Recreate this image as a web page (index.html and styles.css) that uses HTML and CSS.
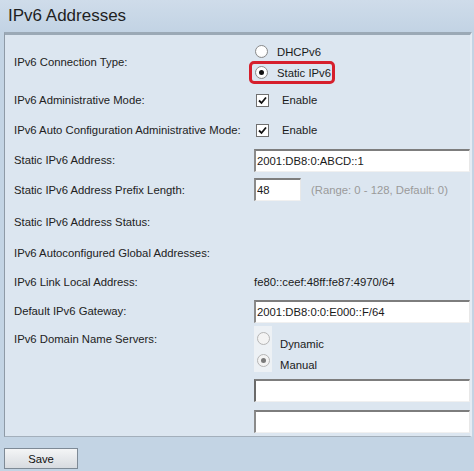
FILE: index.html
```html
<!DOCTYPE html>
<html>
<head>
<meta charset="utf-8">
<link rel="stylesheet" href="styles.css">
</head>
<body>
<div class="page">
  <div class="titlebar"><h1 class="title">IPv6 Addresses</h1></div>
  <div class="panel">
    <div class="form">
      <div class="lbl r1">IPv6 Connection Type:</div>
      <div class="val r1 stack">
        <div class="opt"><span class="radio"></span><span class="otext">DHCPv6</span></div>
        <div class="opt hl"><span class="radio on"></span><span class="otext">Static IPv6</span></div>
      </div>

      <div class="lbl r2">IPv6 Administrative Mode:</div>
      <div class="val r2"><span class="check"><svg width="11" height="11" viewBox="0 0 11 11"><path d="M2 5.5 L4.5 8 L9 2.5" fill="none" stroke="#111" stroke-width="1.8"/></svg></span><span class="ctext">Enable</span></div>

      <div class="lbl r3">IPv6 Auto Configuration Administrative Mode:</div>
      <div class="val r3"><span class="check"><svg width="11" height="11" viewBox="0 0 11 11"><path d="M2 5.5 L4.5 8 L9 2.5" fill="none" stroke="#111" stroke-width="1.8"/></svg></span><span class="ctext">Enable</span></div>

      <div class="lbl r4">Static IPv6 Address:</div>
      <div class="val r4"><input class="field wide" type="text" value="2001:DB8:0:ABCD::1"></div>

      <div class="lbl r5">Static IPv6 Address Prefix Length:</div>
      <div class="val r5"><input class="field short" type="text" value="48"><span class="hint">(Range: 0 - 128, Default: 0)</span></div>

      <div class="lbl r6">Static IPv6 Address Status:</div>
      <div class="val r6"></div>

      <div class="lbl r7">IPv6 Autoconfigured Global Addresses:</div>
      <div class="val r7"></div>

      <div class="lbl r8">IPv6 Link Local Address:</div>
      <div class="val r8"><span class="plain">fe80::ceef:48ff:fe87:4970/64</span></div>

      <div class="lbl r9">Default IPv6 Gateway:</div>
      <div class="val r9"><input class="field wide" type="text" value="2001:DB8:0:0:E000::F/64"></div>

      <div class="lbl r10">IPv6 Domain Name Servers:</div>
      <div class="val r10 dns">
        <div class="dnsopts">
          <div class="dnsradios"><span class="radio dis"></span><span class="radio dis on"></span></div>
          <div class="dnslabels"><span>Dynamic</span><span>Manual</span></div>
        </div>
        <input class="field wide caret" type="text" value="">
        <input class="field wide" type="text" value="">
      </div>
    </div>
  </div>
  <div class="footer"><button class="save" type="button">Save</button></div>
</div>
</body>
</html>
```
FILE: styles.css
```css
html, body {
  margin: 0;
  padding: 0;
}
body {
  width: 474px;
  height: 471px;
  overflow: hidden;
  background: #c3d4e4;
  font-family: "Liberation Sans", Arial, sans-serif;
  font-size: 11.3px;
  color: #1a1a1a;
}
.page {
  display: flex;
  flex-direction: column;
  height: 471px;
}
.titlebar {
  height: 32px;
  background: linear-gradient(#cfdcea, #c2d3e4);
  display: flex;
  align-items: center;
  padding-left: 8px;
}
.title {
  margin: 0;
  font-weight: normal;
  font-size: 17px;
  color: #1f1f1f;
}
.panel {
  margin: 0 2px 0 4px;
  background: #dce6f0;
  border-top: 3px solid #9ba9b6;
  border-left: 1px solid #8e9aa6;
  border-bottom: 1px solid #a3afbb;
  border-right: 2px solid #e4ecf4;
  padding: 5px 0 0 9px;
  height: 405px;
  box-sizing: border-box;
}
.form {
  display: grid;
  grid-template-columns: 240px 216px;
  grid-template-rows: 44px 32px 28px 32px 27px 38px 24px 34px 24px auto;
}
.lbl {
  display: flex;
  align-items: center;
  white-space: nowrap;
  color: #222;
}
.val {
  display: flex;
  align-items: center;
}
.stack {
  flex-direction: column;
  align-items: flex-start;
  justify-content: center;
}
.opt {
  display: flex;
  align-items: center;
  height: 21px;
  padding-left: 1px;
}
.opt.hl {
  position: relative;
}
.opt.hl::after {
  content: "";
  position: absolute;
  left: -5px;
  top: -1px;
  width: 80px;
  height: 17px;
  border: 3px solid #d61f2c;
  border-radius: 5px;
}
.radio {
  width: 11px;
  height: 11px;
  border-radius: 50%;
  border: 1px solid #8a8a8a;
  background: radial-gradient(circle at 50% 40%, #ffffff 55%, #e6e6e6);
  display: inline-flex;
  align-items: center;
  justify-content: center;
  flex: none;
}
.radio.on::after {
  content: "";
  width: 5px;
  height: 5px;
  border-radius: 50%;
  background: #111;
}
.radio.dis {
  border-color: #b5b5b5;
  background: #f3f3f3;
}
.radio.dis.on::after {
  background: #7a7a7a;
}
.otext {
  margin-left: 9px;
  color: #1a1a1a;
}
.check {
  width: 11px;
  height: 11px;
  border: 1px solid #6f6f6f;
  background: #fff;
  margin-left: 2px;
  display: inline-flex;
  align-items: center;
  justify-content: center;
}
.ctext {
  margin-left: 13px;
}
.field {
  box-sizing: border-box;
  height: 23px;
  border: none;
  border-top: 2px solid #7d7d7d;
  border-left: 2px solid #8a8a8a;
  border-right: 1px solid #e8e8e8;
  border-bottom: 1px solid #f0f0f0;
  background: #fff;
  font-family: "Liberation Sans", Arial, sans-serif;
  font-size: 11.3px;
  color: #1a1a1a;
  padding: 0 0 0 1px;
  margin: 0;
  outline: none;
}
.wide {
  width: 216px;
}
.short {
  width: 47px;
}
.hint {
  margin-left: 10px;
  color: #9a9a9a;
}
.plain {
  color: #1a1a1a;
}
.r10.lbl {
  align-items: flex-start;
  padding-top: 10px;
}
.dns {
  flex-direction: column;
  align-items: flex-start;
  padding-top: 3px;
}
.dnsopts {
  display: flex;
  height: 46px;
}
.dnsradios {
  width: 18px;
  background: #edf1f5;
  display: flex;
  flex-direction: column;
  align-items: center;
  padding-top: 6px;
  gap: 9px;
  box-sizing: border-box;
}
.dnslabels {
  display: flex;
  flex-direction: column;
  padding-top: 12px;
  padding-left: 8px;
  gap: 8px;
  line-height: 13px;
}
.dns .field {
  margin-top: 7px;
}
.dns .field + .field {
  margin-top: 8px;
}
.caret {
  border-left: 2px solid #6a6a6a;
}
.footer {
  padding: 11px 0 0 4px;
}
.save {
  width: 74px;
  height: 21px;
  border: 1px solid #7e8a96;
  background: linear-gradient(#f4f5f6, #d7dbe0);
  font-family: "Liberation Sans", Arial, sans-serif;
  font-size: 11.3px;
  color: #111;
  padding: 0;
}
```
